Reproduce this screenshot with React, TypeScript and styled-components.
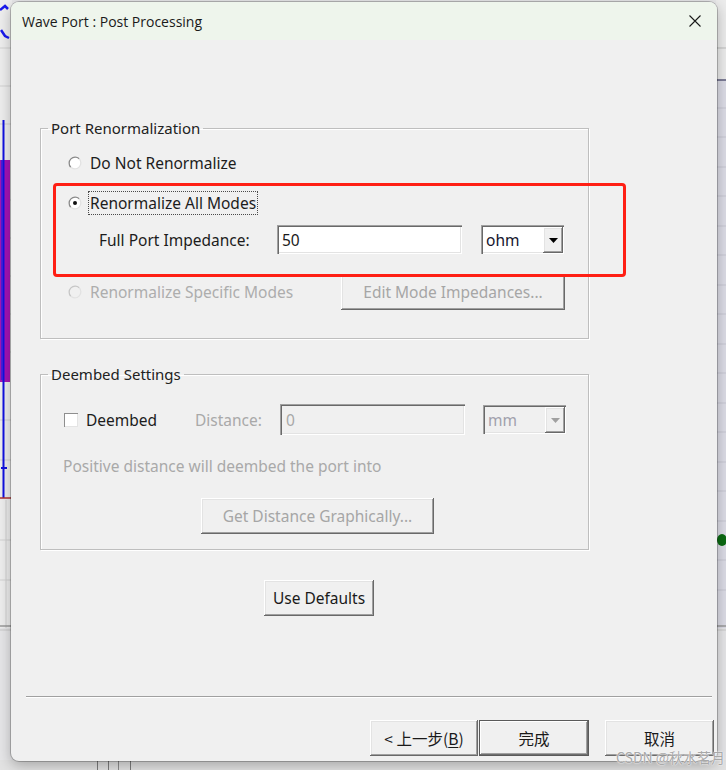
import React from "react"
import styled, { createGlobalStyle, css } from "styled-components"

const LATIN = `"Noto Sans", "Noto Sans CJK SC", sans-serif`
const CJK = `"Noto Sans CJK SC", "Noto Sans", sans-serif`

const GlobalStyle = createGlobalStyle`
  html, body {
    margin: 0;
    padding: 0;
    background: #e4e4e6;
  }
  body {
    width: 726px;
    height: 770px;
    overflow: hidden;
    font-family: ${LATIN};
  }
`

const raised = css`
  box-shadow: inset -1px -1px 0 #696969, inset 1px 1px 0 #ffffff,
    inset -2px -2px 0 #a0a0a0, inset 2px 2px 0 #e3e3e3;
`

const sunken = css`
  box-shadow: inset 1px 1px 0 #a0a0a0, inset 2px 2px 0 #696969,
    inset -1px -1px 0 #ffffff, inset -2px -2px 0 #e3e3e3;
`

// the app behind the dialog (a chart), only its edges show
function Backdrop() {
  const leftGrid = [48, 86, 124, 200, 238, 276, 314, 352, 420, 460, 540, 580]
  const rightGrid = [108, 137, 167, 196, 226, 255, 285, 314, 344, 373, 403, 432, 462, 491, 521, 560, 590]
  return (
    <BackdropSvg width="726" height="770" viewBox="0 0 726 770">
      <rect x="0" y="0" width="726" height="770" fill="#e6e6e8" />
      <rect x="0" y="0" width="12" height="628" fill="#eeeeee" />
      {leftGrid.map(y => (
        <line key={y} x1="0" y1={y} x2="12" y2={y} stroke="#d2d2d2" />
      ))}
      <rect x="0" y="160" width="10" height="222" fill="#a613b5" />
      <path d="M0 10 L5 6 L8 9 M1 30 L5 36 L9 38" fill="none" stroke="#1a1aee" strokeWidth="2.5" />
      <line x1="3.5" y1="120" x2="3.5" y2="498" stroke="#1010e0" strokeWidth="2" />
      <line x1="2" y1="160" x2="2" y2="380" stroke="#3020e0" strokeWidth="1.5" />
      <line x1="1" y1="468" x2="7" y2="468" stroke="#1010e0" strokeWidth="2" />
      <line x1="0" y1="498" x2="12" y2="498" stroke="#b03030" strokeWidth="1.5" />
      <line x1="6" y1="500" x2="6" y2="628" stroke="#d0d0d0" />
      <line x1="0" y1="626" x2="12" y2="626" stroke="#9a9a9a" strokeWidth="1.5" />
      <line x1="0" y1="630" x2="12" y2="630" stroke="#c8c8c8" />

      <rect x="716" y="0" width="10" height="80" fill="#ececec" />
      <line x1="716" y1="48" x2="726" y2="48" stroke="#bdbdbd" />
      <rect x="716" y="80" width="10" height="548" fill="#dcdce6" />
      <line x1="716" y1="80" x2="726" y2="80" stroke="#5c5c7c" strokeWidth="1.5" />
      {rightGrid.map(y => (
        <line key={y} x1="716" y1={y} x2="726" y2={y} stroke="#c6c6d2" />
      ))}
      <ellipse cx="722" cy="540" rx="5" ry="6" fill="#0b6a12" />
      <line x1="716" y1="626" x2="726" y2="626" stroke="#9a9a9a" strokeWidth="1.5" />
      <line x1="716" y1="630" x2="726" y2="630" stroke="#c8c8c8" />

      <rect x="0" y="760" width="726" height="10" fill="#e2e2e2" />
      <line x1="97.5" y1="760" x2="97.5" y2="770" stroke="#7c7c7c" />
      <line x1="108.5" y1="760" x2="108.5" y2="770" stroke="#7c7c7c" />
      <line x1="118.5" y1="760" x2="118.5" y2="770" stroke="#8c8c8c" />
      <line x1="130.5" y1="760" x2="130.5" y2="770" stroke="#7c7c7c" />
    </BackdropSvg>
  )
}

function RadioMark({ checked, disabled }: { checked?: boolean; disabled?: boolean }) {
  return (
    <svg width="14" height="14" viewBox="0 0 14 14">
      <circle cx="7" cy="7" r="6" fill={disabled ? "#f0f0f0" : "#ffffff"} />
      <path d="M11.24 2.76 A6 6 0 0 0 2.76 11.24" fill="none" stroke={disabled ? "#c6c6c6" : "#8a8a8a"} strokeWidth="1.3" />
      <path d="M2.76 11.24 A6 6 0 0 0 11.24 2.76" fill="none" stroke="#e2e2e2" strokeWidth="1.3" />
      {checked && <circle cx="7" cy="7" r="2" fill="#111111" />}
    </svg>
  )
}

function Radio({ label, checked, disabled, focused }: { label: string; checked?: boolean; disabled?: boolean; focused?: boolean }) {
  return (
    <RadioOption>
      <RadioMark checked={checked} disabled={disabled} />
      <OptionText $disabled={disabled} $focused={focused}>{label}</OptionText>
    </RadioOption>
  )
}

function Combo({ value, disabled }: { value: string; disabled?: boolean }) {
  return (
    <ComboBox $disabled={disabled}>
      <ComboValue $disabled={disabled}>{value}</ComboValue>
      <ComboArrow>
        <svg width="9" height="5" viewBox="0 0 9 5">
          <polygon points="0,0 9,0 4.5,5" fill={disabled ? "#a0a0a0" : "#000000"} />
        </svg>
      </ComboArrow>
    </ComboBox>
  )
}

export default function App() {
  return (
    <Desktop>
      <GlobalStyle />
      <Backdrop />
      <Window>
        <TitleBar>
          <Title>Wave Port : Post Processing</Title>
          <CloseGlyph width="12" height="12" viewBox="0 0 12 12">
            <path d="M0.5 0.5 L11.5 11.5 M11.5 0.5 L0.5 11.5" stroke="#1a1a1a" strokeWidth="1.1" />
          </CloseGlyph>
        </TitleBar>

        <Content>
          <GroupBox $top={78}>
            <GroupLegend>Port Renormalization</GroupLegend>
            <GroupInner $bottom={28}>
              <Row $top={12} $height={26} $indent={27}>
                <Radio label="Do Not Renormalize" />
              </Row>
              <Row $top={14} $height={26} $indent={27}>
                <Radio label="Renormalize All Modes" checked focused />
              </Row>
              <Row $top={9} $height={29} $indent={58}>
                <FieldLabel $width={178}>Full Port Impedance:</FieldLabel>
                <TextField $width={185}>50</TextField>
                <Spacer $width={19} />
                <Combo value="ohm" />
              </Row>
              <Row $top={20} $height={36} $indent={27}>
                <OptionSlot $width={273}>
                  <Radio label="Renormalize Specific Modes" disabled />
                </OptionSlot>
                <PushButton $width={224} disabled>Edit Mode Impedances...</PushButton>
              </Row>
            </GroupInner>
          </GroupBox>

          <GroupBox $top={25}>
            <GroupLegend>Deembed Settings</GroupLegend>
            <GroupInner $bottom={15}>
              <Row $top={20} $height={31} $indent={23}>
                <OptionSlot $width={131}>
                  <CheckOption>
                    <CheckBox />
                    <span>Deembed</span>
                  </CheckOption>
                </OptionSlot>
                <FieldLabel $width={85} $disabled>Distance:</FieldLabel>
                <TextField $width={185} $disabled>0</TextField>
                <Spacer $width={18} />
                <Combo value="mm" disabled />
              </Row>
              <Hint>Positive distance will deembed the port into</Hint>
              <Row $top={22} $height={36} $indent={160}>
                <PushButton $width={233} disabled>Get Distance Graphically...</PushButton>
              </Row>
            </GroupInner>
          </GroupBox>

          <Row $top={30} $height={36} $indent={253}>
            <PushButton $width={110}>Use Defaults</PushButton>
          </Row>

          <Separator />

          <Footer>
            <PushButton $width={108} $cjk>
              &lt; 上一步(<u>B</u>)
            </PushButton>
            <PushButton $width={110} $cjk $primary $gap={1}>完成</PushButton>
            <PushButton $width={109} $cjk $gap={16}>取消</PushButton>
          </Footer>
        </Content>

        <RedMark />
      </Window>
      <Watermark>CSDN @秋水茗月</Watermark>
    </Desktop>
  )
}

const Desktop = styled.div`
  position: relative;
  width: 726px;
  height: 770px;
  overflow: hidden;
`

const BackdropSvg = styled.svg`
  position: absolute;
  left: 0;
  top: 0;
  display: block;
`

const Window = styled.div`
  position: absolute;
  left: 11px;
  top: 2px;
  width: 706px;
  height: 759px;
  display: flex;
  flex-direction: column;
  background: #f0f0f0;
  border-radius: 8px;
  overflow: hidden;
  box-shadow: 0 0 0 1px rgba(0, 0, 0, 0.22), 0 4px 14px rgba(0, 0, 0, 0.28);
`

const TitleBar = styled.div`
  height: 38px;
  flex: none;
  display: flex;
  align-items: center;
  justify-content: space-between;
  padding: 0 16px 0 11px;
  background: #eef5ec;
`

const Title = styled.span`
  font-family: "Open Sans", ${LATIN};
  font-size: 14px;
  color: #1a1a1a;
`

const CloseGlyph = styled.svg`
  display: block;
`

const Content = styled.div`
  flex: 1;
  display: flex;
  flex-direction: column;
  font-size: 15.5px;
  color: #1c1c1c;
`

const GroupBox = styled.fieldset<{ $top: number }>`
  margin: ${p => p.$top}px 0 0 29px;
  padding: 0;
  width: 549px;
  box-sizing: border-box;
  min-width: 0;
  border: 1px solid #bebebe;
  box-shadow: inset 1px 1px 0 #ffffff, 1px 1px 0 #ffffff;
`

const GroupLegend = styled.legend`
  margin-left: 7px;
  padding: 0 3px;
  font-size: 15px;
  line-height: 20px;
  color: #222222;
`

const GroupInner = styled.div<{ $bottom: number }>`
  display: flex;
  flex-direction: column;
  padding-bottom: ${p => p.$bottom}px;
`

const Row = styled.div<{ $top: number; $height: number; $indent: number }>`
  display: flex;
  align-items: center;
  flex: none;
  margin-top: ${p => p.$top}px;
  height: ${p => p.$height}px;
  padding-left: ${p => p.$indent}px;
`

const RadioOption = styled.label`
  display: flex;
  align-items: center;
  gap: 6px;
  svg {
    flex: none;
  }
`

const OptionText = styled.span<{ $disabled?: boolean; $focused?: boolean }>`
  padding: 0 1px;
  line-height: 22px;
  border: 1px dotted ${p => (p.$focused ? "#4a4a4a" : "transparent")};
  color: ${p => (p.$disabled ? "#adadad" : "#1c1c1c")};
`

const OptionSlot = styled.div<{ $width: number }>`
  width: ${p => p.$width}px;
  flex: none;
`

const CheckOption = styled.label`
  display: flex;
  align-items: center;
  gap: 8px;
`

const CheckBox = styled.span`
  display: block;
  width: 14px;
  height: 14px;
  box-sizing: border-box;
  background: #ffffff;
  box-shadow: inset 1px 1px 0 #8e8e8e, inset -1px -1px 0 #e4e4e4;
`

const FieldLabel = styled.span<{ $width: number; $disabled?: boolean }>`
  width: ${p => p.$width}px;
  flex: none;
  color: ${p => (p.$disabled ? "#a9a9a9" : "#1c1c1c")};
`

const TextField = styled.div<{ $width: number; $disabled?: boolean }>`
  width: ${p => p.$width}px;
  height: 100%;
  box-sizing: border-box;
  flex: none;
  display: flex;
  align-items: center;
  padding-left: ${p => (p.$disabled ? 6 : 5)}px;
  background: ${p => (p.$disabled ? "#f0f0f0" : "#ffffff")};
  color: ${p => (p.$disabled ? "#a8a8a8" : "#1a1a1a")};
  ${sunken}
`

const Spacer = styled.span<{ $width: number }>`
  width: ${p => p.$width}px;
  flex: none;
`

const ComboBox = styled.div<{ $disabled?: boolean }>`
  width: 83px;
  height: 29px;
  box-sizing: border-box;
  flex: none;
  display: flex;
  align-items: stretch;
  padding: 2px 1px 1px 2px;
  background: ${p => (p.$disabled ? "#f0f0f0" : "#ffffff")};
  ${sunken}
`

const ComboValue = styled.span<{ $disabled?: boolean }>`
  flex: 1;
  display: flex;
  align-items: center;
  padding-left: 3px;
  color: ${p => (p.$disabled ? "#a0a0ac" : "#14142c")};
`

const ComboArrow = styled.span`
  width: 20px;
  flex: none;
  display: flex;
  align-items: center;
  justify-content: center;
  background: #f0f0f0;
  ${raised}
`

const Hint = styled.div`
  margin-top: 21px;
  padding-left: 22px;
  line-height: 20px;
  color: #a9a9a9;
`

const PushButton = styled.button<{ $width: number; $primary?: boolean; $cjk?: boolean; $gap?: number }>`
  width: ${p => p.$width}px;
  height: 36px;
  flex: none;
  margin: 0 0 0 ${p => p.$gap ?? 0}px;
  padding: 0;
  border: none;
  background: #f0f0f0;
  font-family: ${p => (p.$cjk ? CJK : LATIN)};
  font-size: 15.5px;
  color: #1a1a1a;
  ${raised}
  &:disabled {
    color: #a6a6a6;
  }
  ${p =>
    p.$primary &&
    css`
      box-shadow: inset 0 0 0 1px #5a5a5a, inset -2px -2px 0 #6e6e6e, inset 2px 2px 0 #ffffff,
        inset -3px -3px 0 #a0a0a0;
    `}
  u {
    text-underline-offset: 2px;
  }
`

const Separator = styled.div`
  margin: 80px 0 0 15px;
  width: 686px;
  height: 1px;
  flex: none;
  background: #a0a0a0;
  box-shadow: 0 1px 0 #ffffff;
`

const Footer = styled.div`
  display: flex;
  margin-top: 23px;
  padding-left: 359px;
`

const RedMark = styled.div`
  position: absolute;
  left: 42px;
  top: 181px;
  width: 573px;
  height: 94px;
  box-sizing: border-box;
  border: 3px solid #ff1f14;
  border-radius: 4px;
  pointer-events: none;
`

const Watermark = styled.div`
  position: absolute;
  left: 616px;
  top: 750px;
  font-family: ${CJK};
  font-size: 14px;
  line-height: 14px;
  color: #a8a8a8;
  text-shadow: 0 0 2px #ffffff, 0 0 1px #ffffff;
  pointer-events: none;
`
